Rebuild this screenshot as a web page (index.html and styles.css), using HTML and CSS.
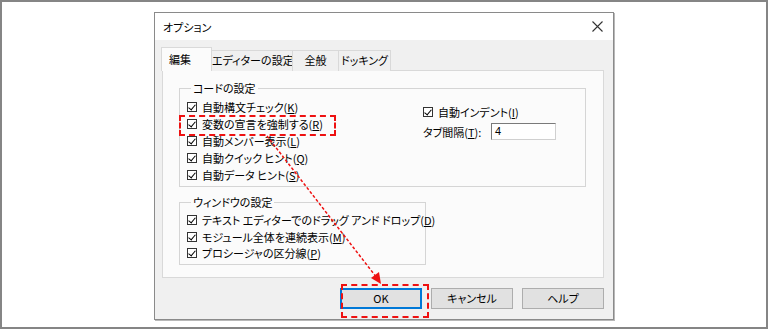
FILE: index.html
```html
<!DOCTYPE html>
<html lang="ja">
<head>
<meta charset="utf-8">
<title>オプション</title>
<link rel="stylesheet" href="styles.css">
</head>
<body>
<div class="frame">
  <div class="dialog">
    <div class="titlebar">
      <span class="title">オプション</span>
      <svg class="close" width="11" height="11" viewBox="0 0 11 11"><path d="M0.5 0.5 L10.5 10.5 M10.5 0.5 L0.5 10.5" stroke="#333" stroke-width="1.1" fill="none"/></svg>
    </div>
    <div class="body">
      <div class="tabs">
        <div class="tab active">編集</div>
        <div class="tab t2">エディターの設定</div>
        <div class="tab t3">全般</div>
        <div class="tab t4">ドッキング</div>
      </div>
      <div class="panel">
        <fieldset class="group g1">
          <legend>コードの設定</legend>
          <div class="cols">
            <div class="col">
              <div class="row"><span class="cb"></span>自動構文チェック(<u>K</u>)</div>
              <div class="row"><span class="cb"></span>変数の宣言を強制する(<u>R</u>)</div>
              <div class="row"><span class="cb"></span>自動メンバー表示(<u>L</u>)</div>
              <div class="row"><span class="cb"></span>自動クイック ヒント(<u>Q</u>)</div>
              <div class="row"><span class="cb"></span>自動データ ヒント(<u>S</u>)</div>
            </div>
            <div class="col right">
              <div class="row"><span class="cb"></span>自動インデント(<u>I</u>)</div>
              <div class="row tabrow"><span class="lbl">タブ間隔(<u>T</u>):</span><span class="input">4</span></div>
            </div>
          </div>
        </fieldset>
        <fieldset class="group g2">
          <legend>ウィンドウの設定</legend>
          <div class="row"><span class="cb"></span>テキスト エディターでのドラッグ アンド ドロップ(<u>D</u>)</div>
          <div class="row"><span class="cb"></span>モジュール全体を連続表示(<u>M</u>)</div>
          <div class="row"><span class="cb"></span>プロシージャの区分線(<u>P</u>)</div>
        </fieldset>
      </div>
      <div class="buttons">
        <div class="btn default">OK</div>
        <div class="btn">キャンセル</div>
        <div class="btn">ヘルプ</div>
      </div>
    </div>
  </div>
  <div class="mark mark-row"></div>
  <div class="mark mark-ok"></div>
  <svg class="arrow" width="768" height="329" viewBox="0 0 768 329">
    <line x1="265" y1="134" x2="375" y2="276" stroke="#ee1111" stroke-width="1.5" stroke-dasharray="3 2"/>
    <polygon points="379,282 369,276 377,270" fill="#ee1111"/>
  </svg>
</div>
</body>
</html>
```

FILE: styles.css
```css
* { box-sizing: border-box; }
html, body { margin: 0; padding: 0; background: #fff; }
body {
  font-family: "Noto Sans CJK JP", "Noto Sans", sans-serif;
  font-size: 11px;
  font-feature-settings: "palt" 1;
  color: #000;
}
.frame {
  position: relative;
  width: 768px;
  height: 329px;
  border: 2px solid #858585;
  padding: 10px 0 0 152px;
}
.dialog {
  width: 460px;
  height: 308px;
  border: 1px solid #8a8a8a;
  box-shadow: 1px 1px 0 #b8b8b8;
  display: flex;
  flex-direction: column;
  background: #f0f0f0;
}
.titlebar {
  height: 27px;
  background: #fff;
  display: flex;
  align-items: center;
  justify-content: space-between;
  padding: 0 10px 0 8px;
}
.title { font-size: 11px; line-height: 14px; }
.close { display: block; }
.body {
  flex: 1;
  padding: 7px 9px 0 6px;
  display: flex;
  flex-direction: column;
}
.tabs {
  display: flex;
  align-items: flex-end;
  height: 24px;
  position: relative;
  z-index: 1;
  margin-bottom: -1px;
}
.tab {
  height: 21px;
  line-height: 19px;
  padding: 0;
  text-align: center;
  white-space: nowrap;
  border: 1px solid #d9d9d9;
  border-bottom: none;
  background: #f0f0f0;
  margin-left: -1px;
}
.t2 { width: 82px; }
.t3 { width: 47px; }
.t4 { width: 53px; }
.tab.active {
  height: 24px;
  line-height: 22px;
  width: 51px;
  text-align: left;
  padding-left: 7px;
  background: #fbfbfb;
  margin-left: 0;
}
.panel {
  width: 442px;
  height: 208px;
  margin-left: 1px;
  border: 1px solid #d9d9d9;
  background: #fbfbfb;
  padding: 10px 0 0 16px;
}
.group {
  margin: 0;
  border: 1px solid #d5d5d5;
  padding: 0 0 3px 7px;
  min-width: 0;
}
.group legend {
  padding: 0 2px;
  margin-left: 4px;
  line-height: 14px;
}
.g1 { width: 407px; height: 106px; padding-top: 3px; }
.g2 { width: 247px; height: 70px; margin-top: 8px; padding-top: 3px; }
.cols {
  display: grid;
  grid-template-columns: 236px auto;
}
.row {
  display: flex;
  align-items: center;
  height: 17px;
  white-space: nowrap;
}
.g2 .row { height: 16.5px; }
.cb {
  width: 10px;
  height: 10px;
  border: 1px solid #333;
  background: #fff;
  margin-right: 5px;
  position: relative;
  flex: none;
}
.cb::after {
  content: "";
  position: absolute;
  left: 2px;
  top: 0px;
  width: 3px;
  height: 6px;
  border: solid #000;
  border-width: 0 1.6px 1.6px 0;
  transform: rotate(40deg);
}
.right { padding-top: 5px; }
.tabrow { margin-top: 3px; }
.lbl { width: 68px; }
.input {
  width: 65px;
  height: 17px;
  border: 1px solid #7a7a7a;
  border-right-color: #d0d0d0;
  border-bottom-color: #d0d0d0;
  background: #fff;
  padding-left: 3px;
  line-height: 15px;
  font-family: "Liberation Sans", sans-serif;
}
.buttons {
  display: flex;
  justify-content: flex-end;
  gap: 9px;
  margin-top: 10px;
}
.btn {
  width: 82px;
  height: 21px;
  border: 1px solid #adadad;
  background: #e1e1e1;
  text-align: center;
  line-height: 19px;
  font-size: 11px;
}
.btn.default {
  border: 2px solid #0078d7;
  line-height: 17px;
}
.mark {
  position: absolute;
  border: 2px dashed #ee1111;
}
.mark-row { left: 177px; top: 113px; width: 157px; height: 21px; }
.mark-ok { left: 339px; top: 282px; width: 88px; height: 34px; }
.arrow { position: absolute; left: 0; top: 0; }
```
